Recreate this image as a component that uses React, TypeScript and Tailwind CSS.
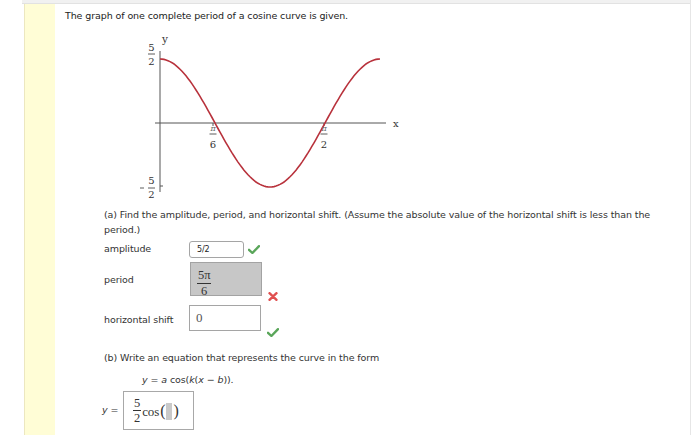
import React from "react";

// Worked question card: cosine graph + answer boxes

function Check() {
  return (
    <svg width="12" height="9" viewBox="0 0 12 9" className="block">
      <path d="M1 4.8 L4.4 8 L11 1.2" fill="none" stroke="#5aa65a" strokeWidth="2.4" strokeLinecap="round" strokeLinejoin="round" />
    </svg>
  );
}

function Cross() {
  return (
    <svg width="10" height="9" viewBox="0 0 10 9" className="block">
      <path d="M1.5 1.2 L8.5 7.8 M8.5 1.2 L1.5 7.8" fill="none" stroke="#e05050" strokeWidth="2.4" strokeLinecap="round" />
    </svg>
  );
}

function Frac({ top, bottom, className = "" }: { top: React.ReactNode; bottom: React.ReactNode; className?: string }) {
  return (
    <span className={`inline-flex flex-col items-center leading-none ${className}`}>
      <span className="px-[1px]">{top}</span>
      <span className="w-full border-t border-[#333] mt-[1px] pt-[1px] text-center">{bottom}</span>
    </span>
  );
}

function Graph() {
  // svg origin sits at page (130, 30)
  const pts: string[] = [];
  for (let i = 0; i <= 110; i++) {
    const x = 30 + i * 2;
    const y = 94 - 64 * Math.cos((2 * Math.PI * (x - 30)) / 220);
    pts.push(`${x.toFixed(1)},${y.toFixed(1)}`);
  }
  const serif = { fontFamily: "'DejaVu Serif', serif" };
  return (
    <svg width="272" height="172" viewBox="0 0 272 172" className="block">
      <line x1="25" y1="94" x2="256" y2="94" stroke="#555" strokeWidth="1" />
      <line x1="30" y1="22" x2="30" y2="163" stroke="#555" strokeWidth="1" />
      <line x1="30" y1="157" x2="33" y2="157" stroke="#555" strokeWidth="1" />
      <line x1="83" y1="94" x2="83" y2="97" stroke="#555" strokeWidth="1" />
      <line x1="194" y1="94" x2="194" y2="97" stroke="#555" strokeWidth="1" />
      <polyline points={pts.join(" ")} fill="none" stroke="#b8323c" strokeWidth="1.6" />
      <g style={serif} fill="#333" fontSize="10.5">
        <text x="32" y="14">y</text>
        <text x="263" y="98" fontSize="10">x</text>
        <text x="21.5" y="22" textAnchor="middle" fontSize="10">5</text>
        <line x1="18" y1="25" x2="25" y2="25" stroke="#333" strokeWidth="0.8" />
        <text x="21.5" y="36" textAnchor="middle" fontSize="10">2</text>
        <line x1="10" y1="159" x2="14" y2="159" stroke="#333" strokeWidth="0.8" />
        <text x="21.5" y="155" textAnchor="middle" fontSize="10">5</text>
        <line x1="18" y1="159" x2="25" y2="159" stroke="#333" strokeWidth="0.8" />
        <text x="21.5" y="169" textAnchor="middle" fontSize="10">2</text>
        <text x="83" y="102" textAnchor="middle" fontSize="8" fill="#666" fontStyle="italic">π</text>
        <line x1="79.5" y1="105" x2="86.5" y2="105" stroke="#333" strokeWidth="0.8" />
        <text x="83" y="119" textAnchor="middle" fontSize="10">6</text>
        <text x="194" y="102" textAnchor="middle" fontSize="8" fill="#666" fontStyle="italic">π</text>
        <line x1="190.5" y1="105" x2="197.5" y2="105" stroke="#333" strokeWidth="0.8" />
        <text x="194" y="119" textAnchor="middle" fontSize="10">2</text>
      </g>
    </svg>
  );
}

export default function App() {
  return (
    <div className="w-[700px] h-[435px] bg-white overflow-hidden font-['DejaVu_Sans',sans-serif] text-[9.5px] tracking-[-0.1px] text-[#333]">
      <div className="ml-[22px] w-[669px] h-full border-r border-[#e6e6e6] flex flex-col">
        <div className="h-[4px] bg-[#f1f1f1] border-b border-[#e2e2e2]" />
        <div className="flex flex-1">
          <div className="ml-[2px] w-[31px] bg-[#fffdd6] border-l border-[#ece7c0]" />
          <div className="flex-1 pl-[10px]">
            <p className="pt-[5px] leading-[14px] text-[#222]">
              The graph of one complete period of a cosine curve is given.
            </p>

            <div className="mt-[6px] ml-[65px]">
              <Graph />
            </div>

            <div className="ml-[39px]">
              <p className="mt-[6px] leading-[15px] w-[560px]">
                (a) Find the amplitude, period, and horizontal shift. (Assume the absolute value of the horizontal shift is less than the period.)
              </p>

              {/* amplitude */}
              <div className="mt-[4px] flex items-center h-[17px]">
                <span className="w-[85px]">amplitude</span>
                <div className="w-[55px] h-[17px] rounded-[3px] border border-[#a5a5a5] flex items-center pl-[7px] text-[8px] text-[#222]">
                  5/2
                </div>
                <div className="ml-[4px]">
                  <Check />
                </div>
              </div>

              {/* period */}
              <div className="mt-[4px] flex">
                <span className="w-[86px] self-start mt-[11px]">period</span>
                <div className="w-[72px] h-[34px] bg-[#c7c7c7] border border-[#a3a3a3] pl-[6px] pt-[3px] font-['Liberation_Serif',serif] text-[12.5px] text-[#333]">
                  <Frac top="5π" bottom="6" />
                </div>
                <div className="ml-[6px] mt-[30px]">
                  <Cross />
                </div>
              </div>

              {/* horizontal shift */}
              <div className="mt-[4px] flex">
                <span className="w-[85px] self-start mt-[8px]">horizontal shift</span>
                <div className="w-[72px] h-[26px] border border-[#a5a5a5] flex items-center pl-[6px] font-['Liberation_Serif',serif] text-[13px] text-[#555]">
                  0
                </div>
                <div className="ml-[6px] mt-[23px]">
                  <Check />
                </div>
              </div>

              {/* part b */}
              <p className="mt-[13px] leading-[15px]">
                (b) Write an equation that represents the curve in the form
              </p>
              <p className="mt-[7px] ml-[38px] leading-[15px]">
                <i>y</i> = <i>a</i> cos(<i>k</i>(<i>x</i> − <i>b</i>)).
              </p>

              <div className="mt-[4px] -ml-[2px] flex items-center">
                <span className="w-[21px]">
                  <i>y</i> =
                </span>
                <div className="w-[71px] h-[39px] border border-[#a8a8a8] flex items-center pl-[9px] font-['Liberation_Serif',serif] text-[13px] text-[#333]">
                  <Frac top="5" bottom="2" className="text-[12.5px]" />
                  <span className="ml-[1px] text-[13px] mt-[3px]">cos</span>
                  <span className="text-[16px] leading-none ml-[1px] font-light">(</span>
                  <span className="w-[6px] h-[17px] bg-[#c9c9c9] mx-[1px] mt-[1px]" />
                  <span className="text-[16px] leading-none font-light">)</span>
                </div>
              </div>
            </div>
          </div>
        </div>
      </div>
    </div>
  );
}
